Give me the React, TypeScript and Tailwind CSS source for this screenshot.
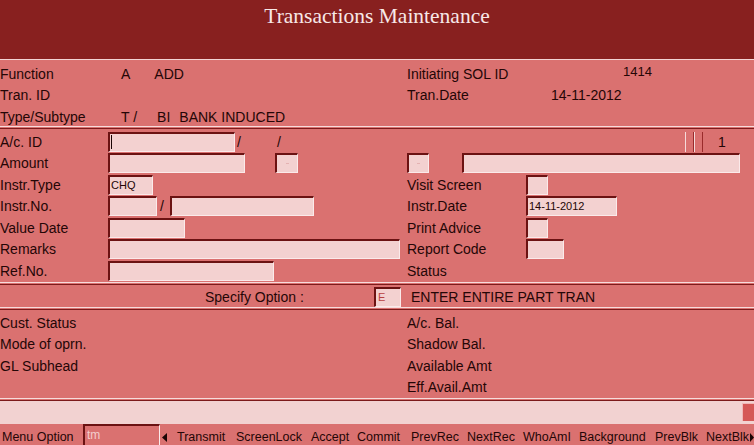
import type { ReactNode } from 'react';

const sans = { fontFamily: '"Liberation Sans", Arial, sans-serif' };

function Field({ className = '', children }: { className?: string; children?: ReactNode }) {
  return (
    <div
      className={`h-[20px] shrink-0 flex items-center bg-[#f3d1d0] border-t-2 border-l-2 border-t-[#6b1212] border-l-[#6b1212] border-b border-r border-b-[#fbeaea] border-r-[#fbeaea] ${className}`}
    >
      {children}
    </div>
  );
}

function Sep() {
  return <div className="h-[3px] border-t border-b border-t-[#f6dcdc] border-b-[#7c1b1b]" />;
}

function Row({ children }: { children: ReactNode }) {
  return <div className="flex h-[21.5px] items-center">{children}</div>;
}

const toolbar: [string, string][] = [
  ['Transmit', 'w-[59px]'],
  ['ScreenLock', 'w-[75px]'],
  ['Accept', 'w-[46px]'],
  ['Commit', 'w-[54px]'],
  ['PrevRec', 'w-[56px]'],
  ['NextRec', 'w-[56px]'],
  ['WhoAmI', 'w-[56px]'],
  ['Background', 'w-[76px]'],
  ['PrevBlk', 'w-[51px]'],
  ['NextBlk', 'w-[44px]'],
];

export default function App() {
  return (
    <div className="w-[754px] h-[445px] overflow-hidden bg-[#da7170] text-[#240606] text-[14px] leading-none" style={sans}>
      {/* Title bar */}
      <div className="h-[60px] bg-[#88201f] border-b border-b-[#f3d4d4] flex justify-center pt-[4px]">
        <span className="text-[21.5px] leading-[25px] text-[#f7e8e8]" style={{ fontFamily: '"Liberation Serif", "Times New Roman", serif' }}>
          Transactions Maintenance
        </span>
      </div>

      {/* Header info */}
      <div className="h-[66px] pt-[3px]">
        <Row>
          <div className="w-[407px] flex">
            <span className="w-[108px]">Function</span>
            <span className="ml-[13px]">A</span>
            <span className="ml-[24px]">ADD</span>
          </div>
          <span className="w-[119px]">Initiating SOL ID</span>
          <span className="ml-[97px] -mt-[5px] text-[13px]">1414</span>
        </Row>
        <Row>
          <div className="w-[407px] flex">
            <span className="w-[108px]">Tran. ID</span>
          </div>
          <span className="w-[119px]">Tran.Date</span>
          <span className="ml-[25px]">14-11-2012</span>
        </Row>
        <Row>
          <div className="w-[407px] flex">
            <span className="w-[108px]">Type/Subtype</span>
            <span className="ml-[13px]">T /</span>
            <span className="ml-[20px]">BI</span>
            <span className="ml-[9px]">BANK INDUCED</span>
          </div>
        </Row>
      </div>
      <Sep />

      {/* Transaction detail */}
      <div className="h-[153px] pt-[2px]">
        <Row>
          <div className="w-[407px] flex items-center">
            <span className="w-[108px]">A/c. ID</span>
            <Field className="w-[127px]">
              <span className="ml-[1px] w-px h-[14px] bg-[#1a0404]" />
            </Field>
            <span className="ml-[2px]">/</span>
            <span className="ml-[36px]">/</span>
          </div>
          <div className="ml-[278px] flex h-[20px]">
            <span className="w-[9px] border-l border-r border-l-[#f5dada] border-r-[#9a2b2b]" />
            <span className="w-[9px] border-l border-r border-l-[#f5dada] border-r-[#9a2b2b]" />
          </div>
          <span className="ml-[15px]">1</span>
        </Row>
        <Row>
          <div className="w-[407px] flex items-center">
            <span className="w-[108px]">Amount</span>
            <Field className="w-[137px]" />
            <Field className="ml-[30px] w-[23px] justify-center">
              <span className="w-[3px] h-px bg-[#e4b2b2]" />
            </Field>
          </div>
          <Field className="w-[22px] justify-center">
            <span className="w-[3px] h-px bg-[#e4b2b2]" />
          </Field>
          <Field className="ml-[33px] w-[278px]" />
        </Row>
        <Row>
          <div className="w-[407px] flex items-center">
            <span className="w-[108px]">Instr.Type</span>
            <Field className="w-[45px]">
              <span className="ml-[1px] text-[11px]">CHQ</span>
            </Field>
          </div>
          <span className="w-[119px]">Visit Screen</span>
          <Field className="w-[22px]" />
        </Row>
        <Row>
          <div className="w-[407px] flex items-center">
            <span className="w-[108px]">Instr.No.</span>
            <Field className="w-[49px]" />
            <span className="ml-[3px]">/</span>
            <Field className="ml-[6px] w-[144px]" />
          </div>
          <span className="w-[119px]">Instr.Date</span>
          <Field className="w-[91px]">
            <span className="ml-[1px] text-[11px]">14-11-2012</span>
          </Field>
        </Row>
        <Row>
          <div className="w-[407px] flex items-center">
            <span className="w-[108px]">Value Date</span>
            <Field className="w-[77px]" />
          </div>
          <span className="w-[119px]">Print Advice</span>
          <Field className="w-[22px]" />
        </Row>
        <Row>
          <div className="w-[407px] flex items-center">
            <span className="w-[108px]">Remarks</span>
            <Field className="w-[292px]" />
          </div>
          <span className="w-[119px]">Report Code</span>
          <Field className="w-[38px]" />
        </Row>
        <Row>
          <div className="w-[407px] flex items-center">
            <span className="w-[108px]">Ref.No.</span>
            <Field className="w-[166px]" />
          </div>
          <span>Status</span>
        </Row>
      </div>
      <Sep />

      {/* Specify option */}
      <div className="h-[22px] flex items-center pt-px">
        <span className="ml-[205px] w-[169px]">Specify Option :</span>
        <Field className="w-[27px]">
          <span className="ml-[2px] text-[11px] text-[#b8403f]">E</span>
        </Field>
        <span className="ml-[10px]">ENTER ENTIRE PART TRAN</span>
      </div>
      <Sep />

      {/* Balances */}
      <div className="h-[88px] pt-[2px]">
        <Row>
          <span className="w-[407px]">Cust. Status</span>
          <span>A/c. Bal.</span>
        </Row>
        <Row>
          <span className="w-[407px]">Mode of oprn.</span>
          <span>Shadow Bal.</span>
        </Row>
        <Row>
          <span className="w-[407px]">GL Subhead</span>
          <span>Available Amt</span>
        </Row>
        <Row>
          <span className="w-[407px]" />
          <span>Eff.Avail.Amt</span>
        </Row>
      </div>
      <Sep />

      {/* Message bar */}
      <div className="h-[23px] bg-[#f2d2d1] flex justify-end">
        <span className="mt-[2px] w-[12px] h-[18px] bg-[#d55857] border-l border-t border-l-[#f0b8b8] border-t-[#f0b8b8]" />
      </div>

      {/* Toolbar */}
      <div className="h-[21px] flex items-center text-[12.5px]">
        <span className="ml-[2px] w-[81px] pt-[5px]">Menu Option</span>
        <div className="h-[21px] w-[77px] flex items-center border-t-2 border-l-2 border-r border-t-[#6b1212] border-l-[#6b1212] border-r-[#fbeaea]">
          <span className="ml-[2px] -mt-[2px] text-[12px] text-[#f4cccc]">tm</span>
        </div>
        <svg className="ml-[2px] mt-[5px]" width="5" height="9" viewBox="0 0 5 9">
          <polygon points="5,0 0,4.5 5,9" fill="#1a0404" />
        </svg>
        <div className="ml-[10px] flex pt-[5px]">
          {toolbar.map(([label, w]) => (
            <span key={label} className={w}>
              {label}
            </span>
          ))}
        </div>
        <svg className="mt-[5px]" width="4" height="9" viewBox="0 0 4 9">
          <polygon points="0,0 4,4.5 0,9" fill="#1a0404" />
        </svg>
      </div>
    </div>
  );
}
